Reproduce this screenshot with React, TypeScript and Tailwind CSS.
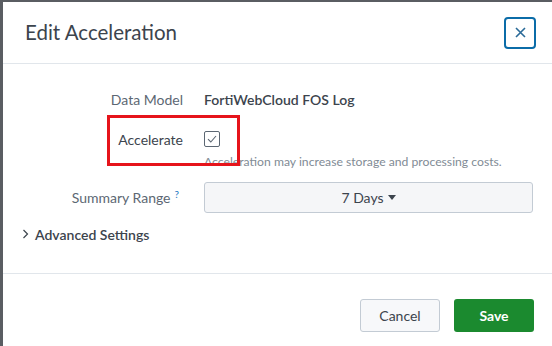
import React from "react";

export default function App() {
  return (
    <div
      className="relative w-[552px] h-[346px] overflow-hidden bg-[#5a5d62] pl-[3px] pt-[2px] flex"
      style={{ fontFamily: "Lato, 'Open Sans', sans-serif" }}
    >
      <div className="flex-1 bg-white flex flex-col">
        {/* Header */}
        <div className="h-[62px] flex items-center justify-between pl-[22px] pr-[16px] border-b border-[#e1e6eb]">
          <h2 className="text-[20.5px] text-[#3c444d] leading-none">Edit Acceleration</h2>
          <button className="w-[32px] h-[32px] rounded-[4px] border-[2px] border-[#0b6ca8] flex items-center justify-center">
            <svg width="11" height="11" viewBox="0 0 11 11" fill="none">
              <path d="M1 1L10 10M10 1L1 10" stroke="#2a6a98" strokeWidth="1.6" />
            </svg>
          </button>
        </div>

        {/* Body */}
        <div className="h-[210px] flex flex-col pt-[23px] border-b border-[#e1e6eb]">
          <div className="flex items-center h-[24px]">
            <div className="w-[180px] text-right text-[14px] text-[#5c6773]">Data Model</div>
            <div className="ml-[21px] text-[14px] font-semibold text-[#3c444d]">FortiWebCloud FOS Log</div>
          </div>
          <div className="flex items-center h-[24px] mt-[16px]">
            <div className="w-[180px] text-right text-[14px] text-[#3c444d]">Accelerate</div>
            <div className="ml-[21px] w-[16px] h-[16px] rounded-[2px] border border-[#5c6773] flex items-center justify-center">
              <svg width="10" height="8" viewBox="0 0 10 8" fill="none">
                <path d="M1 4.2L3.8 7L9 1" stroke="#5c6773" strokeWidth="1.1" />
              </svg>
            </div>
          </div>
          <div className="flex h-[16px] mt-[3px] items-center">
            <div className="w-[180px]" />
            <div className="ml-[21px] text-[12.2px] text-[#818b95]">
              Acceleration may increase storage and processing costs.
            </div>
          </div>
          <div className="flex items-center h-[31px] mt-[12px]">
            <div className="w-[180px] text-right text-[14px] text-[#5c6773] pr-[4px]">
              Summary Range
              <sup className="ml-[4px] text-[10px] text-[#1a78c2]">?</sup>
            </div>
            <button className="ml-[21px] w-[329px] h-[31px] rounded-[3px] border border-[#c3cbd4] bg-[#f5f6f8] text-[14px] text-[#3c444d] flex items-center justify-center">
              7 Days
              <svg className="ml-[4px]" width="8" height="5" viewBox="0 0 8 5">
                <path d="M0 0H8L4 5Z" fill="#3c444d" />
              </svg>
            </button>
          </div>
          <div className="flex items-center h-[20px] mt-[11px] pl-[19px] text-[14px] font-semibold text-[#3c444d]">
            <svg width="7" height="10" viewBox="0 0 7 10" fill="none">
              <path d="M1.5 1L5.5 5L1.5 9" stroke="#3c444d" strokeWidth="1.2" />
            </svg>
            <span className="ml-[6px]">Advanced Settings</span>
          </div>
        </div>

        {/* Footer */}
        <div className="flex-1 flex justify-end items-start pt-[25px] pr-[18px] gap-[14px]">
          <button className="w-[80px] h-[33px] rounded-[3px] border border-[#c3cbd4] bg-[#f7f8fa] text-[14px] text-[#3c444d]">
            Cancel
          </button>
          <button className="w-[80px] h-[33px] rounded-[3px] bg-[#1b8a2f] text-[14px] font-bold text-white">
            Save
          </button>
        </div>
      </div>

      {/* Red highlight box */}
      <div className="absolute left-[107px] top-[115px] w-[133px] h-[51px] border-[3px] border-[#e6141b]" />
    </div>
  );
}
